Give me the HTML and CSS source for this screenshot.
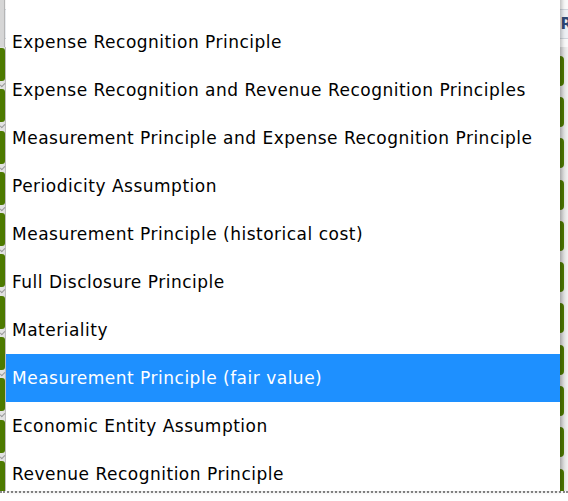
FILE: index.html
```html
<!DOCTYPE html>
<html>
<head>
<meta charset="utf-8">
<link rel="stylesheet" href="styles.css">
</head>
<body>
<div class="page">
  <div class="header">
    <div class="head-left"></div>
    <div class="head-right"><span class="head-r">R</span></div>
  </div>
  <div class="rows">
    <div class="row"><span class="lcell"><span class="tick"></span></span><span class="rcell"></span></div>
    <div class="row"><span class="lcell"><span class="tick"></span></span><span class="rcell"></span></div>
    <div class="row"><span class="lcell"><span class="tick"></span></span><span class="rcell"></span></div>
    <div class="row"><span class="lcell"><span class="tick"></span></span><span class="rcell"></span></div>
    <div class="row"><span class="lcell"><span class="tick"></span></span><span class="rcell"></span></div>
    <div class="row"><span class="lcell"><span class="tick"></span></span><span class="rcell"></span></div>
    <div class="row"><span class="lcell"><span class="tick"></span></span><span class="rcell"></span></div>
    <div class="row"><span class="lcell"><span class="tick"></span></span><span class="rcell"></span></div>
    <div class="row"><span class="lcell"><span class="tick"></span></span><span class="rcell"></span></div>
    <div class="row"><span class="lcell"><span class="tick"></span></span><span class="rcell"></span></div>
    <div class="row"><span class="lcell"><span class="tick"></span></span><span class="rcell"></span></div>
  </div>
  <div class="footer"></div>

  <ul class="dropdown">
    <li class="opt"></li>
    <li class="opt">Expense Recognition Principle</li>
    <li class="opt">Expense Recognition and Revenue Recognition Principles</li>
    <li class="opt">Measurement Principle and Expense Recognition Principle</li>
    <li class="opt">Periodicity Assumption</li>
    <li class="opt">Measurement Principle (historical cost)</li>
    <li class="opt">Full Disclosure Principle</li>
    <li class="opt">Materiality</li>
    <li class="opt selected">Measurement Principle (fair value)</li>
    <li class="opt">Economic Entity Assumption</li>
    <li class="opt">Revenue Recognition Principle</li>
  </ul>
</div>
</body>
</html>
```

FILE: styles.css
```css
html, body {
  margin: 0;
  padding: 0;
}
body {
  width: 568px;
  height: 501px;
  overflow: hidden;
  background: #fafafa;
  font-family: "DejaVu Sans", Verdana, sans-serif;
}
.page {
  position: relative;
  width: 568px;
  height: 501px;
  overflow: hidden;
}
.header {
  display: flex;
  height: 47px;
}
.head-left {
  width: 4px;
  background: #d6d6d6;
  border-right: 1px solid #b8b8b8;
}
.head-right {
  flex: 1;
  display: flex;
  justify-content: flex-end;
  align-items: center;
  margin-top: 9px;
  height: 28px;
  border-top: 1px solid #d0d6de;
  border-bottom: 1px solid #d0d6de;
  background: #eef1f5;
}
.head-r {
  font-weight: bold;
  font-size: 15px;
  color: #2e4a78;
  margin-right: -4px;
}
.rows {
  display: flex;
  flex-direction: column;
  height: 444px;
  overflow: hidden;
}
.row {
  display: flex;
  flex: none;
  justify-content: space-between;
  height: 41.3px;
}
.lcell {
  width: 5px;
  display: flex;
  flex-direction: column;
  background: #e2e2e2;
  border-right: 1px solid #c4c4c4;
}
.lcell::before {
  content: "";
  display: block;
  height: 33px;
  margin-top: 1px;
  background: #4d7a00;
  border-radius: 0 3px 3px 0;
}
.tick {
  display: block;
  width: 4px;
  height: 2px;
  margin-top: 2px;
  border-left: 1px solid #9a9a9a;
  border-bottom: 1px solid #9a9a9a;
  transform: rotate(-45deg);
}
.rcell {
  width: 8px;
  height: 100%;
  display: flex;
  align-items: center;
  background: linear-gradient(to right, #d8d8d8, #f2f2f2);
}
.rcell::before {
  content: "";
  display: block;
  width: 4px;
  height: 30px;
  margin-top: 6px;
  background: #4d7a00;
  border-radius: 0 15px 15px 0;
}
.footer {
  border-top: 2px dotted #8c8c8c;
  height: 8px;
  background: #ffffff;
}
.dropdown {
  position: absolute;
  left: 6px;
  top: -30px;
  width: 554px;
  height: 521px;
  margin: 0;
  padding: 0;
  list-style: none;
  background: #ffffff;
  box-shadow: 2px 0 4px rgba(0, 0, 0, 0.25);
  overflow: hidden;
}
.opt {
  height: 48px;
  line-height: 48px;
  padding-left: 6px;
  font-size: 17px;
  letter-spacing: 0.5px;
  color: #000000;
  white-space: nowrap;
}
.opt.selected {
  background: #1e90ff;
  color: #ffffff;
}
```
